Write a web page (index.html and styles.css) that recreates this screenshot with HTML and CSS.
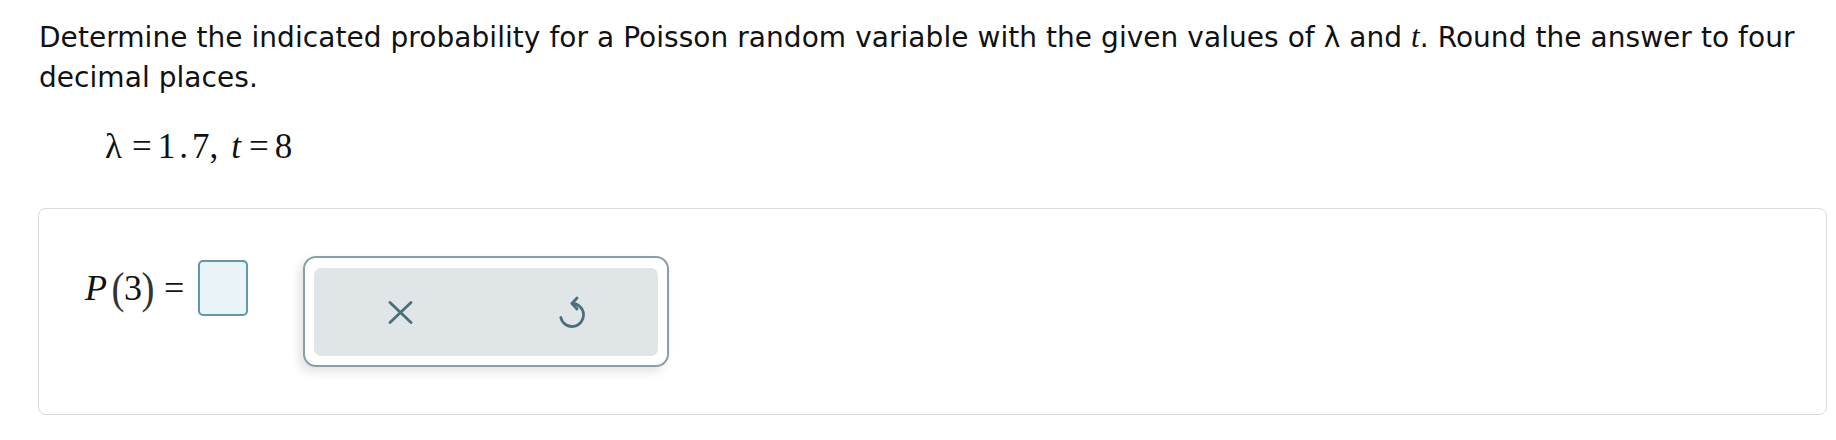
FILE: index.html
```html
<!DOCTYPE html>
<html lang="en">
<head>
<meta charset="utf-8">
<title>Poisson probability</title>
<link rel="stylesheet" href="styles.css">
</head>
<body>
<div class="page">
  <p class="prompt"><span class="line">Determine the indicated probability for a Poisson random variable with the given values of λ and <span class="mi">t</span>. Round the answer to four</span><br><span class="line">decimal places.</span></p>
  <div class="given"><span class="lam">λ</span><span class="op">=</span><span class="num">1</span><span class="dot">.</span><span class="num">7</span><span class="punct">,</span><span class="mi">t</span><span class="op">=</span><span class="num">8</span></div>
  <div class="answer-box">
    <div class="eq">
      <span class="mi">P</span><span class="paren">(</span><span class="num">3</span><span class="paren">)</span><span class="op">=</span><span class="input"></span>
    </div>
    <div class="tools">
      <div class="tools-inner">
        <button class="tool" type="button" aria-label="Clear">
          <svg width="25" height="23" viewBox="0 0 25 23" aria-hidden="true"><path d="M2 1.5 L23 21.5 M23 1.5 L2 21.5" fill="none" stroke="currentColor" stroke-width="2.8" stroke-linecap="round"/></svg>
        </button>
        <button class="tool" type="button" aria-label="Undo">
          <svg width="26" height="32" viewBox="0 0 26 32" aria-hidden="true"><path d="M13 7.5 A11.5 11.5 0 1 1 1.8 21.5" fill="none" stroke="currentColor" stroke-width="2.8" stroke-linecap="round"/><path d="M18 2 L13 7.5 L18 13" fill="none" stroke="currentColor" stroke-width="2.8" stroke-linecap="round" stroke-linejoin="round"/></svg>
        </button>
      </div>
    </div>
  </div>
</div>
</body>
</html>
```
FILE: styles.css
```css
html, body {
  margin: 0;
  padding: 0;
  background: #ffffff;
}

.page {
  padding: 18px 9px 0 38px;
  font-family: "DejaVu Sans", Verdana, sans-serif;
  color: #111;
}

.prompt {
  margin: 0 0 0 1px;
  font-size: 28px;
  line-height: 40px;
  letter-spacing: 0.05px;
}

.prompt .line {
  white-space: nowrap;
}

.mi {
  font-family: "Liberation Serif", "Times New Roman", serif;
  font-style: italic;
}

.prompt .mi {
  font-size: 31px;
  line-height: 1;
}

.given {
  margin: 27px 0 0 67px;
  font-family: "Liberation Serif", "Times New Roman", serif;
  font-size: 35px;
  line-height: 44px;
  height: 44px;
  display: flex;
  align-items: baseline;
}

.given .lam { margin-right: 4px; }
.given .op { margin: 0 6px; }
.given .dot { margin: 0 4px; }
.given .punct { margin-right: 13px; }
.given .mi { margin-right: 2px; }

.answer-box {
  margin-top: 39px;
  border: 1px solid #d5dbe0;
  border-radius: 8px;
  padding: 47px 0 47px 46px;
  display: flex;
  align-items: flex-start;
}

.eq {
  margin-top: 4px;
  height: 56px;
  display: flex;
  align-items: center;
  font-family: "Liberation Serif", "Times New Roman", serif;
  font-size: 36px;
}

.eq .mi { margin-right: 5px; }

.eq .paren {
  display: inline-block;
  color: #333;
  transform: scale(1.08, 1.25);
}

.eq .op {
  margin-left: 10px;
  margin-right: 14px;
}

.input {
  width: 46px;
  height: 52px;
  border: 2px solid #6199aa;
  border-radius: 5px;
  background: #e9f4f9;
}

.tools {
  margin-left: 55px;
  width: 366px;
  height: 111px;
  box-sizing: border-box;
  border: 2px solid #8a9ea8;
  border-radius: 13px;
  padding: 10px 9px 9px;
  background: #fff;
  box-shadow: -4px 5px 10px rgba(40, 60, 70, 0.14);
}

.tools-inner {
  height: 100%;
  display: flex;
  background: #e0e5e8;
  border-radius: 7px;
}

.tool {
  flex: 1;
  display: flex;
  align-items: center;
  justify-content: center;
  border: 0;
  padding: 0;
  margin: 0;
  background: transparent;
  color: #4b6e7b;
  cursor: pointer;
}
```
